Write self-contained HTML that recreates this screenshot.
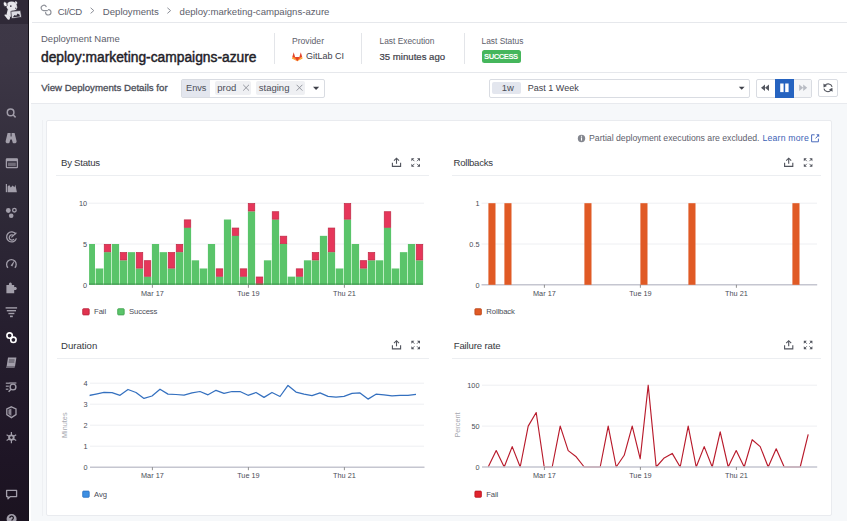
<!DOCTYPE html>
<html><head><meta charset="utf-8">
<style>
*{box-sizing:border-box;margin:0;padding:0}
html,body{width:847px;height:521px;overflow:hidden;background:#fff;font-family:"Liberation Sans", sans-serif;}
.abs{position:absolute;white-space:nowrap}
#side{position:absolute;left:0;top:0;width:28px;height:521px;background:linear-gradient(#3e3847 0px,#3d3746 60px,#2f2a38 200px,#272030 310px,#1e1525 460px,#1b1320 521px);}
#sideline{position:absolute;left:28px;top:0;width:1px;height:521px;background:#15121a}
#logo{position:absolute;left:0;top:0;width:28px;height:23.5px;background:#2f2937}
.content{position:absolute;left:31px;top:102.6px;width:816px;height:419px;background:#f6f8fa;border-top:1px solid #e8eaee}
.panel{position:absolute;left:46px;top:120px;width:786px;height:396px;background:#fff;border:1px solid #e9ebef;border-radius:2px}
.shadow{position:absolute;left:42px;top:120px;width:1px;height:396px;background:#eef0f3}
.hline{position:absolute;height:1px;background:#e6e8ec}
.vline{position:absolute;width:1px;background:#e3e5e9}
.lbl{color:#5d606b}
</style></head><body>
<div id="side"></div>
<div id="logo"></div>
<div id="sideline"></div>
<div class="content"></div>
<div class="shadow"></div>
<div class="panel"></div>

<!-- breadcrumb -->
<div class="hline" style="left:32px;top:22px;width:815px"></div>
<div class="abs" style="left:57.8px;top:4.6px;font-size:9.6px;line-height:14px;color:#5d606b;letter-spacing:-0.45px">CI/CD</div>
<div class="abs" style="left:102.8px;top:4.6px;font-size:9.6px;line-height:14px;color:#5d606b">Deployments</div>
<div class="abs" style="left:179.6px;top:4.6px;font-size:9.6px;line-height:14px;color:#5d606b">deploy:marketing-campaigns-azure</div>

<!-- header -->
<div class="abs lbl" style="left:41px;top:33px;font-size:9.5px;line-height:11px">Deployment Name</div>
<div class="abs" style="left:41px;top:50px;font-size:13.8px;line-height:15px;font-weight:400;-webkit-text-stroke:0.45px #1f2128;color:#1f2128">deploy:marketing-campaigns-azure</div>
<div class="vline" style="left:274px;top:33px;height:31px"></div>
<div class="abs lbl" style="left:292px;top:36px;font-size:8.6px;line-height:11px">Provider</div>
<div class="abs" style="left:306px;top:51px;font-size:9px;line-height:11px;color:#3e4049">GitLab CI</div>
<div class="vline" style="left:361px;top:33px;height:31px"></div>
<div class="abs lbl" style="left:379.5px;top:36px;font-size:8.4px;line-height:11px">Last Execution</div>
<div class="abs" style="left:379.5px;top:51px;font-size:9.6px;line-height:11px;color:#3e4049;-webkit-text-stroke:0.2px #3e4049">35 minutes ago</div>
<div class="vline" style="left:464px;top:33px;height:31px"></div>
<div class="abs lbl" style="left:481.5px;top:36px;font-size:8.4px;line-height:11px">Last Status</div>
<div class="abs" style="left:481.6px;top:49.6px;width:39px;height:13.4px;background:#45b65c;border-radius:2.5px;color:#fff;font-size:7.7px;font-weight:700;line-height:13.4px;text-align:center;letter-spacing:-0.5px;text-indent:-0.5px">SUCCESS</div>
<div class="hline" style="left:29px;top:72px;width:818px"></div>

<!-- filter row -->
<div class="abs" style="left:41.3px;top:82px;font-size:9.7px;line-height:11px;color:#4b4e58;-webkit-text-stroke:0.3px #4b4e58">View Deployments Details for</div>
<div class="abs" style="left:181px;top:78.5px;width:144px;height:19px;border:1px solid #d9dce2;border-radius:2px;background:#fff"></div>
<div class="abs" style="left:182px;top:79.5px;width:28px;height:17px;background:#e3e6ee"></div>
<div class="abs" style="left:186px;top:82.5px;font-size:9.2px;line-height:11px;color:#4b4e58">Envs</div>
<div class="abs" style="left:215px;top:81px;width:36px;height:13.5px;background:#eff0f3;border-radius:2px"></div>
<div class="abs" style="left:217.3px;top:81.5px;font-size:9.5px;line-height:11px;color:#4b4e58">prod</div>
<div class="abs" style="left:256px;top:81px;width:48.5px;height:13.5px;background:#eff0f3;border-radius:2px"></div>
<div class="abs" style="left:258.8px;top:81.5px;font-size:9.5px;line-height:11px;color:#4b4e58">staging</div>
<div class="abs" style="left:489px;top:78.5px;width:261px;height:19px;border:1px solid #d9dce2;border-radius:2px;background:#fff"></div>
<div class="abs" style="left:492.4px;top:81.6px;width:28.8px;height:12.5px;background:#e3e6ee;border-radius:2px"></div>
<div class="abs" style="left:501.7px;top:81.6px;font-size:9.5px;line-height:11px;color:#4b4e58">1w</div>
<div class="abs" style="left:527.8px;top:82.5px;font-size:9px;line-height:11px;color:#3e4049">Past 1 Week</div>
<div class="abs" style="left:756.4px;top:78.5px;width:56px;height:19px;border:1px solid #d9dce2;border-radius:2px;background:#fff"></div>
<div class="abs" style="left:775px;top:78.5px;width:18.8px;height:19px;background:#2563c0"></div>
<div class="abs" style="left:793.8px;top:79.5px;width:17.7px;height:17px;background:#f5f6f8"></div>
<div class="abs" style="left:818.2px;top:78.6px;width:19.6px;height:18.6px;border:1px solid #d9dce2;border-radius:2px;background:#fff"></div>

<!-- info -->
<div class="abs" style="left:589px;top:133px;font-size:8.7px;line-height:11px;color:#5d606b">Partial deployment executions are excluded. <span style="color:#3c62b6;letter-spacing:0.2px;margin-left:0.6px">Learn more</span></div>

<!-- widget titles -->
<div class="abs" style="left:61px;top:156.8px;font-size:9.6px;line-height:11px;letter-spacing:-0.25px;color:#363840">By Status</div>
<div class="abs" style="left:453.5px;top:156.8px;font-size:9.6px;line-height:11px;letter-spacing:-0.25px;color:#363840">Rollbacks</div>
<div class="abs" style="left:61px;top:339.9px;font-size:9.6px;line-height:11px;color:#363840">Duration</div>
<div class="abs" style="left:453.7px;top:339.9px;font-size:9.6px;line-height:11px;letter-spacing:-0.14px;color:#363840">Failure rate</div>
<div class="hline" style="left:56px;top:175px;width:373px;background:#eceef1"></div>
<div class="hline" style="left:452px;top:175px;width:369px;background:#eceef1"></div>
<div class="hline" style="left:56.5px;top:357.5px;width:372.5px;background:#eceef1"></div>
<div class="hline" style="left:452px;top:357.5px;width:369px;background:#eceef1"></div>

<svg class="abs" style="left:0;top:0" width="847" height="521" viewBox="0 0 847 521" font-family='"Liberation Sans", sans-serif'>
<line x1="88.5" y1="244.0" x2="424" y2="244.0" stroke="#eeeff2" stroke-width="1"/>
<line x1="88.5" y1="203.20000000000002" x2="424" y2="203.20000000000002" stroke="#eeeff2" stroke-width="1"/>
<text x="87" y="287.5" font-size="7.3" fill="#4a4d57" text-anchor="end" >0</text>
<text x="87" y="246.7" font-size="7.3" fill="#4a4d57" text-anchor="end" >5</text>
<text x="87" y="205.9" font-size="7.3" fill="#4a4d57" text-anchor="end" >10</text>
<rect x="89.10" y="244.00" width="5.90" height="40.80" fill="#5ac46a"/>
<rect x="95.90" y="268.48" width="7.20" height="16.32" fill="#5ac46a"/>
<rect x="103.90" y="252.16" width="7.20" height="32.64" fill="#5ac46a"/>
<rect x="104.25" y="244.35" width="6.50" height="7.46" fill="#e6365a" stroke="#bf2a45" stroke-width="0.7"/>
<rect x="111.90" y="244.00" width="7.20" height="40.80" fill="#5ac46a"/>
<rect x="119.90" y="260.32" width="7.20" height="24.48" fill="#5ac46a"/>
<rect x="120.25" y="252.51" width="6.50" height="7.46" fill="#e6365a" stroke="#bf2a45" stroke-width="0.7"/>
<rect x="127.90" y="252.16" width="7.20" height="32.64" fill="#5ac46a"/>
<rect x="135.90" y="268.48" width="7.20" height="16.32" fill="#5ac46a"/>
<rect x="136.25" y="252.51" width="6.50" height="15.62" fill="#e6365a" stroke="#bf2a45" stroke-width="0.7"/>
<rect x="143.90" y="276.64" width="7.20" height="8.16" fill="#5ac46a"/>
<rect x="144.25" y="260.67" width="6.50" height="15.62" fill="#e6365a" stroke="#bf2a45" stroke-width="0.7"/>
<rect x="151.90" y="244.00" width="7.20" height="40.80" fill="#5ac46a"/>
<rect x="159.90" y="252.16" width="7.20" height="32.64" fill="#5ac46a"/>
<rect x="167.90" y="268.48" width="7.20" height="16.32" fill="#5ac46a"/>
<rect x="168.25" y="252.51" width="6.50" height="15.62" fill="#e6365a" stroke="#bf2a45" stroke-width="0.7"/>
<rect x="175.90" y="252.16" width="7.20" height="32.64" fill="#5ac46a"/>
<rect x="176.25" y="244.35" width="6.50" height="7.46" fill="#e6365a" stroke="#bf2a45" stroke-width="0.7"/>
<rect x="183.90" y="227.68" width="7.20" height="57.12" fill="#5ac46a"/>
<rect x="184.25" y="219.87" width="6.50" height="7.46" fill="#e6365a" stroke="#bf2a45" stroke-width="0.7"/>
<rect x="191.90" y="260.32" width="7.20" height="24.48" fill="#5ac46a"/>
<rect x="199.90" y="268.48" width="7.20" height="16.32" fill="#5ac46a"/>
<rect x="207.90" y="244.00" width="7.20" height="40.80" fill="#5ac46a"/>
<rect x="215.90" y="276.64" width="7.20" height="8.16" fill="#5ac46a"/>
<rect x="216.25" y="268.83" width="6.50" height="7.46" fill="#e6365a" stroke="#bf2a45" stroke-width="0.7"/>
<rect x="223.90" y="219.52" width="7.20" height="65.28" fill="#5ac46a"/>
<rect x="231.90" y="235.84" width="7.20" height="48.96" fill="#5ac46a"/>
<rect x="232.25" y="228.03" width="6.50" height="7.46" fill="#e6365a" stroke="#bf2a45" stroke-width="0.7"/>
<rect x="239.90" y="276.64" width="7.20" height="8.16" fill="#5ac46a"/>
<rect x="240.25" y="268.83" width="6.50" height="7.46" fill="#e6365a" stroke="#bf2a45" stroke-width="0.7"/>
<rect x="247.90" y="211.36" width="7.20" height="73.44" fill="#5ac46a"/>
<rect x="248.25" y="203.55" width="6.50" height="7.46" fill="#e6365a" stroke="#bf2a45" stroke-width="0.7"/>
<rect x="256.25" y="276.99" width="6.50" height="7.46" fill="#e6365a" stroke="#bf2a45" stroke-width="0.7"/>
<rect x="263.90" y="260.32" width="7.20" height="24.48" fill="#5ac46a"/>
<rect x="271.90" y="219.52" width="7.20" height="65.28" fill="#5ac46a"/>
<rect x="272.25" y="211.71" width="6.50" height="7.46" fill="#e6365a" stroke="#bf2a45" stroke-width="0.7"/>
<rect x="279.90" y="244.00" width="7.20" height="40.80" fill="#5ac46a"/>
<rect x="280.25" y="236.19" width="6.50" height="7.46" fill="#e6365a" stroke="#bf2a45" stroke-width="0.7"/>
<rect x="287.90" y="276.64" width="7.20" height="8.16" fill="#5ac46a"/>
<rect x="295.90" y="276.64" width="7.20" height="8.16" fill="#5ac46a"/>
<rect x="296.25" y="268.83" width="6.50" height="7.46" fill="#e6365a" stroke="#bf2a45" stroke-width="0.7"/>
<rect x="303.90" y="260.32" width="7.20" height="24.48" fill="#5ac46a"/>
<rect x="311.90" y="260.32" width="7.20" height="24.48" fill="#5ac46a"/>
<rect x="312.25" y="252.51" width="6.50" height="7.46" fill="#e6365a" stroke="#bf2a45" stroke-width="0.7"/>
<rect x="319.90" y="235.84" width="7.20" height="48.96" fill="#5ac46a"/>
<rect x="327.90" y="252.16" width="7.20" height="32.64" fill="#5ac46a"/>
<rect x="328.25" y="228.03" width="6.50" height="23.78" fill="#e6365a" stroke="#bf2a45" stroke-width="0.7"/>
<rect x="335.90" y="268.48" width="7.20" height="16.32" fill="#5ac46a"/>
<rect x="343.90" y="219.52" width="7.20" height="65.28" fill="#5ac46a"/>
<rect x="344.25" y="203.55" width="6.50" height="15.62" fill="#e6365a" stroke="#bf2a45" stroke-width="0.7"/>
<rect x="351.90" y="244.00" width="7.20" height="40.80" fill="#5ac46a"/>
<rect x="359.90" y="268.48" width="7.20" height="16.32" fill="#5ac46a"/>
<rect x="360.25" y="260.67" width="6.50" height="7.46" fill="#e6365a" stroke="#bf2a45" stroke-width="0.7"/>
<rect x="367.90" y="260.32" width="7.20" height="24.48" fill="#5ac46a"/>
<rect x="368.25" y="252.51" width="6.50" height="7.46" fill="#e6365a" stroke="#bf2a45" stroke-width="0.7"/>
<rect x="375.90" y="260.32" width="7.20" height="24.48" fill="#5ac46a"/>
<rect x="383.90" y="227.68" width="7.20" height="57.12" fill="#5ac46a"/>
<rect x="384.25" y="211.71" width="6.50" height="15.62" fill="#e6365a" stroke="#bf2a45" stroke-width="0.7"/>
<rect x="391.90" y="268.48" width="7.20" height="16.32" fill="#5ac46a"/>
<rect x="399.90" y="252.16" width="7.20" height="32.64" fill="#5ac46a"/>
<rect x="407.90" y="244.00" width="7.20" height="40.80" fill="#5ac46a"/>
<rect x="415.90" y="260.32" width="7.20" height="24.48" fill="#5ac46a"/>
<rect x="416.25" y="244.35" width="6.50" height="15.62" fill="#e6365a" stroke="#bf2a45" stroke-width="0.7"/>
<rect x="95.10" y="268.48" width="0.8" height="16.32" fill="#b6ecbc"/>
<rect x="103.10" y="268.48" width="0.8" height="16.32" fill="#b6ecbc"/>
<rect x="111.10" y="252.16" width="0.8" height="32.64" fill="#b6ecbc"/>
<rect x="119.10" y="260.32" width="0.8" height="24.48" fill="#b6ecbc"/>
<rect x="127.10" y="260.32" width="0.8" height="24.48" fill="#b6ecbc"/>
<rect x="135.10" y="268.48" width="0.8" height="16.32" fill="#b6ecbc"/>
<rect x="143.10" y="276.64" width="0.8" height="8.16" fill="#b6ecbc"/>
<rect x="151.10" y="276.64" width="0.8" height="8.16" fill="#b6ecbc"/>
<rect x="159.10" y="252.16" width="0.8" height="32.64" fill="#b6ecbc"/>
<rect x="167.10" y="268.48" width="0.8" height="16.32" fill="#b6ecbc"/>
<rect x="175.10" y="268.48" width="0.8" height="16.32" fill="#b6ecbc"/>
<rect x="183.10" y="252.16" width="0.8" height="32.64" fill="#b6ecbc"/>
<rect x="191.10" y="260.32" width="0.8" height="24.48" fill="#b6ecbc"/>
<rect x="199.10" y="268.48" width="0.8" height="16.32" fill="#b6ecbc"/>
<rect x="207.10" y="268.48" width="0.8" height="16.32" fill="#b6ecbc"/>
<rect x="215.10" y="276.64" width="0.8" height="8.16" fill="#b6ecbc"/>
<rect x="223.10" y="276.64" width="0.8" height="8.16" fill="#b6ecbc"/>
<rect x="231.10" y="235.84" width="0.8" height="48.96" fill="#b6ecbc"/>
<rect x="239.10" y="276.64" width="0.8" height="8.16" fill="#b6ecbc"/>
<rect x="247.10" y="276.64" width="0.8" height="8.16" fill="#b6ecbc"/>
<rect x="271.10" y="260.32" width="0.8" height="24.48" fill="#b6ecbc"/>
<rect x="279.10" y="244.00" width="0.8" height="40.80" fill="#b6ecbc"/>
<rect x="287.10" y="276.64" width="0.8" height="8.16" fill="#b6ecbc"/>
<rect x="295.10" y="276.64" width="0.8" height="8.16" fill="#b6ecbc"/>
<rect x="303.10" y="276.64" width="0.8" height="8.16" fill="#b6ecbc"/>
<rect x="311.10" y="260.32" width="0.8" height="24.48" fill="#b6ecbc"/>
<rect x="319.10" y="260.32" width="0.8" height="24.48" fill="#b6ecbc"/>
<rect x="327.10" y="252.16" width="0.8" height="32.64" fill="#b6ecbc"/>
<rect x="335.10" y="268.48" width="0.8" height="16.32" fill="#b6ecbc"/>
<rect x="343.10" y="268.48" width="0.8" height="16.32" fill="#b6ecbc"/>
<rect x="351.10" y="244.00" width="0.8" height="40.80" fill="#b6ecbc"/>
<rect x="359.10" y="268.48" width="0.8" height="16.32" fill="#b6ecbc"/>
<rect x="367.10" y="268.48" width="0.8" height="16.32" fill="#b6ecbc"/>
<rect x="375.10" y="260.32" width="0.8" height="24.48" fill="#b6ecbc"/>
<rect x="383.10" y="260.32" width="0.8" height="24.48" fill="#b6ecbc"/>
<rect x="391.10" y="268.48" width="0.8" height="16.32" fill="#b6ecbc"/>
<rect x="399.10" y="268.48" width="0.8" height="16.32" fill="#b6ecbc"/>
<rect x="407.10" y="252.16" width="0.8" height="32.64" fill="#b6ecbc"/>
<rect x="415.10" y="260.32" width="0.8" height="24.48" fill="#b6ecbc"/>
<line x1="89" y1="284.2" x2="423" y2="284.2" stroke="#3d8f4a" stroke-width="1.2" opacity="0.8"/>
<line x1="152.4" y1="284.8" x2="152.4" y2="287.8" stroke="#777" stroke-width="0.8"/>
<text x="152.4" y="295.8" font-size="7.3" fill="#4a4d57" text-anchor="middle" >Mar 17</text>
<line x1="248.4" y1="284.8" x2="248.4" y2="287.8" stroke="#777" stroke-width="0.8"/>
<text x="248.4" y="295.8" font-size="7.3" fill="#4a4d57" text-anchor="middle" >Tue 19</text>
<line x1="344.4" y1="284.8" x2="344.4" y2="287.8" stroke="#777" stroke-width="0.8"/>
<text x="344.4" y="295.8" font-size="7.3" fill="#4a4d57" text-anchor="middle" >Thu 21</text>
<line x1="481.5" y1="244.0" x2="817" y2="244.0" stroke="#eeeff2" stroke-width="1"/>
<line x1="481.5" y1="203.20000000000002" x2="817" y2="203.20000000000002" stroke="#eeeff2" stroke-width="1"/>
<text x="479.5" y="287.5" font-size="7.3" fill="#4a4d57" text-anchor="end" >0</text>
<text x="479.5" y="246.7" font-size="7.3" fill="#4a4d57" text-anchor="end" >0.5</text>
<text x="479.5" y="205.9" font-size="7.3" fill="#4a4d57" text-anchor="end" >1</text>
<line x1="481.5" y1="284.8" x2="817.2" y2="284.8" stroke="#c5c6d0" stroke-width="1.6"/>
<line x1="544.4" y1="284.8" x2="544.4" y2="287.8" stroke="#777" stroke-width="0.8"/>
<text x="544.4" y="295.8" font-size="7.3" fill="#4a4d57" text-anchor="middle" >Mar 17</text>
<line x1="640.4" y1="284.8" x2="640.4" y2="287.8" stroke="#777" stroke-width="0.8"/>
<text x="640.4" y="295.8" font-size="7.3" fill="#4a4d57" text-anchor="middle" >Tue 19</text>
<line x1="736.4" y1="284.8" x2="736.4" y2="287.8" stroke="#777" stroke-width="0.8"/>
<text x="736.4" y="295.8" font-size="7.3" fill="#4a4d57" text-anchor="middle" >Thu 21</text>
<rect x="488.40" y="203.20" width="7.1" height="81.60" fill="#e05a25"/>
<rect x="504.40" y="203.20" width="7.1" height="81.60" fill="#e05a25"/>
<rect x="584.40" y="203.20" width="7.1" height="81.60" fill="#e05a25"/>
<rect x="640.40" y="203.20" width="7.1" height="81.60" fill="#e05a25"/>
<rect x="688.40" y="203.20" width="7.1" height="81.60" fill="#e05a25"/>
<rect x="792.40" y="203.20" width="7.1" height="81.60" fill="#e05a25"/>
<line x1="90" y1="446.2" x2="424" y2="446.2" stroke="#eeeff2" stroke-width="1"/>
<line x1="90" y1="425.2" x2="424" y2="425.2" stroke="#eeeff2" stroke-width="1"/>
<line x1="90" y1="404.2" x2="424" y2="404.2" stroke="#eeeff2" stroke-width="1"/>
<line x1="90" y1="383.2" x2="424" y2="383.2" stroke="#eeeff2" stroke-width="1"/>
<text x="87.5" y="469.9" font-size="7.3" fill="#4a4d57" text-anchor="end" >0</text>
<text x="87.5" y="448.9" font-size="7.3" fill="#4a4d57" text-anchor="end" >1</text>
<text x="87.5" y="427.9" font-size="7.3" fill="#4a4d57" text-anchor="end" >2</text>
<text x="87.5" y="406.9" font-size="7.3" fill="#4a4d57" text-anchor="end" >3</text>
<text x="87.5" y="385.9" font-size="7.3" fill="#4a4d57" text-anchor="end" >4</text>
<clipPath id="cd"><rect x="89.6" y="370" width="340" height="100"/></clipPath>
<polyline clip-path="url(#cd)" points="88.0,395.7 96.0,394.1 104.0,392.4 112.0,392.7 120.0,395.3 128.0,389.5 136.0,392.5 144.0,398.4 152.0,396.0 160.0,389.2 168.0,394.1 176.0,394.5 184.0,395.1 192.0,392.9 200.0,391.5 208.0,394.8 216.0,390.3 224.0,393.3 232.0,391.5 240.0,391.5 248.0,395.3 256.0,392.5 264.0,397.4 272.0,392.5 280.0,396.5 288.0,385.4 296.0,392.1 304.0,394.1 312.0,395.7 320.0,392.9 328.0,396.3 336.0,397.2 344.0,396.3 352.0,393.3 360.0,392.9 368.0,399.1 376.0,394.2 384.0,394.8 392.0,395.8 400.0,395.3 408.0,395.3 416.0,394.4" fill="none" stroke="#3470bf" stroke-width="1.25" stroke-linejoin="round"/>
<line x1="90" y1="467.2" x2="424.5" y2="467.2" stroke="#c5c6d0" stroke-width="1.6"/>
<line x1="152.4" y1="467.2" x2="152.4" y2="470.2" stroke="#777" stroke-width="0.8"/>
<text x="152.4" y="478.2" font-size="7.3" fill="#4a4d57" text-anchor="middle" >Mar 17</text>
<line x1="248.4" y1="467.2" x2="248.4" y2="470.2" stroke="#777" stroke-width="0.8"/>
<text x="248.4" y="478.2" font-size="7.3" fill="#4a4d57" text-anchor="middle" >Tue 19</text>
<line x1="344.4" y1="467.2" x2="344.4" y2="470.2" stroke="#777" stroke-width="0.8"/>
<text x="344.4" y="478.2" font-size="7.3" fill="#4a4d57" text-anchor="middle" >Thu 21</text>
<text x="0" y="0" font-size="7.3" fill="#a6a8af" text-anchor="middle" transform="translate(67.2,425.2) rotate(-90)">Minutes</text>
<line x1="482" y1="426.1" x2="817" y2="426.1" stroke="#eeeff2" stroke-width="1"/>
<line x1="482" y1="385.2" x2="817" y2="385.2" stroke="#eeeff2" stroke-width="1"/>
<text x="479.5" y="469.7" font-size="7.3" fill="#4a4d57" text-anchor="end" >0</text>
<text x="479.5" y="428.8" font-size="7.3" fill="#4a4d57" text-anchor="end" >50</text>
<text x="479.5" y="387.9" font-size="7.3" fill="#4a4d57" text-anchor="end" >100</text>
<polyline points="488.2,467.0 496.2,450.6 504.2,467.0 512.2,446.6 520.2,467.0 528.2,426.1 536.2,412.5 544.2,467.0 552.2,467.0 560.2,426.1 568.2,450.6 576.2,456.8 584.2,467.0 592.2,467.0 600.2,467.0 608.2,426.1 616.2,467.0 624.2,455.3 632.2,426.1 640.2,458.8 648.2,385.2 656.2,467.0 664.2,457.9 672.2,453.4 680.2,467.0 688.2,426.1 696.2,467.0 704.2,446.6 712.2,467.0 720.2,431.9 728.2,467.0 736.2,450.6 744.2,467.0 752.2,439.7 760.2,446.6 768.2,467.0 776.2,448.8 784.2,467.0 792.2,467.0 800.2,467.0 808.2,434.3" fill="none" stroke="#b81a2b" stroke-width="1.15" stroke-linejoin="round"/>
<line x1="482" y1="467.0" x2="817.2" y2="467.0" stroke="#c5c6d0" stroke-width="1.6"/>
<line x1="544.4" y1="467.0" x2="544.4" y2="470.0" stroke="#777" stroke-width="0.8"/>
<text x="544.4" y="478.0" font-size="7.3" fill="#4a4d57" text-anchor="middle" >Mar 17</text>
<line x1="640.4" y1="467.0" x2="640.4" y2="470.0" stroke="#777" stroke-width="0.8"/>
<text x="640.4" y="478.0" font-size="7.3" fill="#4a4d57" text-anchor="middle" >Tue 19</text>
<line x1="736.4" y1="467.0" x2="736.4" y2="470.0" stroke="#777" stroke-width="0.8"/>
<text x="736.4" y="478.0" font-size="7.3" fill="#4a4d57" text-anchor="middle" >Thu 21</text>
<text x="0" y="0" font-size="7.3" fill="#a6a8af" text-anchor="middle" transform="translate(460.2,425) rotate(-90)">Percent</text>
<rect x="82.7" y="308.7" width="6.5" height="6.2" rx="0.8" fill="#e0334f" stroke="#b81f38" stroke-width="0.8"/>
<text x="94.1" y="314.1" font-size="7.7" fill="#4a4d57" text-anchor="start" letter-spacing="-0.12">Fail</text>
<rect x="117.7" y="308.7" width="6.5" height="6.2" rx="0.8" fill="#5ac46a" stroke="#3c9e4b" stroke-width="0.8"/>
<text x="129.1" y="314.1" font-size="7.7" fill="#4a4d57" text-anchor="start" letter-spacing="-0.12">Success</text>
<rect x="474.9" y="308.7" width="6.5" height="6.2" rx="0.8" fill="#e05a25" stroke="#b84418" stroke-width="0.8"/>
<text x="486.3" y="314.1" font-size="7.7" fill="#4a4d57" text-anchor="start" letter-spacing="-0.12">Rollback</text>
<rect x="82.7" y="491.09999999999997" width="6.5" height="6.2" rx="0.8" fill="#3d8fe2" stroke="#2a6fc0" stroke-width="0.8"/>
<text x="94.1" y="496.5" font-size="7.7" fill="#4a4d57" text-anchor="start" letter-spacing="-0.12">Avg</text>
<rect x="474.9" y="491.09999999999997" width="6.5" height="6.2" rx="0.8" fill="#e1232d" stroke="#b8141f" stroke-width="0.8"/>
<text x="486.3" y="496.5" font-size="7.7" fill="#4a4d57" text-anchor="start" letter-spacing="-0.12">Fail</text>
<g fill="#e6e5ea"><ellipse cx="11.6" cy="6" rx="5.3" ry="4.6"/><path d="M13,7 L17.3,6.6 C17.4,8.6 16.4,10.2 14.6,10.6 L12,10.8 Z"/><path d="M15,1.4 C16.4,1 17.6,2 17.2,3.8 L15.6,4 Z"/><path d="M7.8,9.2 L12,10 L11.6,16.4 L9.6,17 L6.6,14.2 Z"/><path d="M4.6,15.6 C4.2,15 4.6,14.4 5.2,14.4 L7.8,14.6 L10.2,17.6 L9.6,19.2 C9.2,19.8 8.4,19.8 7.8,19.6 Z"/></g><ellipse cx="5.2" cy="4.2" rx="1.8" ry="2.6" transform="rotate(-25 5.2 4.2)" fill="#f2f1f5" stroke="#2f2a37" stroke-width="0.7"/><path d="M10.9,11.3 L20.6,10.5 L21.5,17.3 L11.5,18.6 Z" fill="#dcdbe2" stroke="#2f2a37" stroke-width="0.7"/><circle cx="10.8" cy="6.1" r="0.85" fill="#3a3342"/><circle cx="15.8" cy="8.4" r="0.8" fill="#6a6570"/><path d="M12.8,17.2 L14.6,15 L16.2,15.8 L17.6,13.4 L19.6,14.8 L19.9,16.5 Z" fill="#2f2a37"/>
<g fill="none" stroke="#a29eaa" stroke-width="1.5"><circle cx="10.6" cy="112.4" r="3.3"/><line x1="13" y1="114.8" x2="15.6" y2="117.4"/></g>
<g fill="#a29eaa"><path d="M7.6,133 L10.6,133 L10.6,136.6 L11.6,136.6 L11.6,133 L14.6,133 L16.6,141.2 C16.6,142.6 15.8,143.3 14.6,143.3 C13.2,143.3 12.4,142.6 12.4,141.4 L11.8,139.6 L10.4,139.6 L9.8,141.4 C9.8,142.6 9,143.3 7.6,143.3 C6.4,143.3 5.6,142.6 5.6,141.2 Z"/></g>
<g fill="none" stroke="#a29eaa" stroke-width="1.3"><rect x="6.4" y="158.8" width="11" height="8.8" rx="0.6"/></g><rect x="6.4" y="158.8" width="11" height="2.4" fill="#a29eaa"/><rect x="8" y="162.6" width="7.8" height="3.6" fill="#a29eaa" opacity="0.55"/>
<g fill="#a29eaa"><rect x="5.8" y="184" width="1.2" height="8.2"/><path d="M7.6,192.2 L7.6,186.4 L9.2,185 L10.8,187.6 L12.6,185.6 L14.4,187.2 L15.4,184.8 L16.9,192.2 Z"/></g>
<circle cx="8.3" cy="210.5" r="2.4" fill="#a29eaa"/><circle cx="14.4" cy="210.2" r="1.8" fill="none" stroke="#a29eaa" stroke-width="1.3"/><circle cx="11.2" cy="215.8" r="2.3" fill="#a29eaa"/>
<g fill="none" stroke="#a29eaa" stroke-width="1.3"><path d="M15.8,234.2 A5,5 0 1 0 16.4,238.4"/><path d="M13.6,235.6 A2.6,2.6 0 1 0 14,239"/><line x1="11.4" y1="237.4" x2="16.4" y2="232.6"/></g>
<g fill="none" stroke="#a29eaa" stroke-width="1.3"><path d="M8,267.8 A4.8,4.8 0 1 1 14.8,267.8"/></g><path d="M10.6,265.6 L15,259.8 L12.4,266.6 Z" fill="#a29eaa"/>
<path d="M6.4,285 L9,285 C8.6,283.2 9.4,282.4 10.4,282.4 C11.4,282.4 12.2,283.2 11.8,285 L14.2,285 L14.2,287.2 C16,286.8 16.8,287.6 16.8,288.6 C16.8,289.6 16,290.4 14.2,290 L14.2,293.2 L6.4,293.2 Z" fill="#a29eaa"/>
<g fill="#a29eaa"><rect x="5.6" y="307.2" width="11.5" height="1.4"/><rect x="6.8" y="310" width="9.2" height="1.4"/><rect x="8.4" y="312.8" width="6" height="1.4"/><rect x="10" y="315.6" width="2.8" height="1.6"/></g>
<g fill="none" stroke="#ffffff" stroke-width="1.6"><circle cx="9.6" cy="335.6" r="2.7"/><circle cx="13.4" cy="339.8" r="2.7"/></g>
<g fill="#a29eaa"><path d="M8,357.4 L16.4,357.4 L15,366.4 L6.6,366.4 Z"/><path d="M6.2,366.6 L14.8,366.6 L14.6,368 L6,368 Z" opacity="0.6"/></g><g stroke="#2a2230" stroke-width="0.7"><line x1="9" y1="360" x2="14.6" y2="360"/><line x1="8.7" y1="362" x2="14.3" y2="362"/></g>
<g fill="#a29eaa"><rect x="5.8" y="382.6" width="4" height="1.2"/><rect x="5.8" y="385.6" width="3" height="1.2"/><rect x="5.8" y="388.6" width="2.6" height="1.2"/></g><g fill="none" stroke="#a29eaa" stroke-width="1.4"><circle cx="13" cy="387" r="2.9"/><line x1="11" y1="389.2" x2="8.6" y2="391.8"/></g><rect x="9.4" y="382.4" width="7" height="1.2" fill="#a29eaa"/>
<g fill="none" stroke="#a29eaa" stroke-width="1.3"><path d="M11.4,406.8 L16,409 L16,414.6 L11.4,417.6 L6.8,414.6 L6.8,409 Z"/></g><path d="M11.4,408.4 L11.4,416 L8.4,414 L8.4,409.8 Z" fill="#a29eaa" opacity="0.8"/>
<g fill="#a29eaa"><circle cx="11.4" cy="437.6" r="3.2"/></g><g stroke="#a29eaa" stroke-width="1.2"><line x1="11.4" y1="432" x2="11.4" y2="443.2"/><line x1="6.6" y1="434.8" x2="16.2" y2="440.4"/><line x1="6.6" y1="440.4" x2="16.2" y2="434.8"/></g><circle cx="11.4" cy="437.6" r="1.3" fill="#231c28"/>
<path d="M6.6,490.4 L16.6,490.4 L16.6,496.6 L10.4,496.6 L8,498.8 L8,496.6 L6.6,496.6 Z" fill="none" stroke="#a29eaa" stroke-width="1.3" stroke-linejoin="round"/>
<circle cx="11.6" cy="519" r="5" fill="#a29eaa"/><path d="M9.8,518 A1.8,1.8 0 1 1 12.2,519.6 L11.8,520.6" fill="none" stroke="#1c1620" stroke-width="1.2"/>
<g fill="none" stroke="#8e9199" stroke-width="1.15" stroke-linecap="round"><path d="M46.2,6.6 A2.7,2.7 0 1 0 44.2,10.6 L47.4,10.6"/><path d="M45.6,12.4 A2.7,2.7 0 1 0 48.4,9.6"/></g>
<path d="M90.6,7.8 L93.8,10.6 L90.6,13.4" fill="none" stroke="#8b8e97" stroke-width="1"/>
<path d="M167.4,7.8 L170.6,10.6 L167.4,13.4" fill="none" stroke="#8b8e97" stroke-width="1"/>
<path d="M292.3,57 L293.7,52.2 L295.1,57 Z" fill="#e24329"/><path d="M299.4,57 L300.8,52.2 L302.2,57 Z" fill="#e24329"/><path d="M292.3,57 L302.2,57 L297.25,61.2 Z" fill="#fc6d26"/><path d="M295.1,57 L299.4,57 L297.25,61.2 Z" fill="#e24329"/><path d="M292.3,57 L291.9,58.4 L297.25,61.2 Z" fill="#fca326"/><path d="M302.2,57 L302.6,58.4 L297.25,61.2 Z" fill="#fca326"/>
<g stroke="#8a8d96" stroke-width="0.9"><line x1="243.2" y1="84.8" x2="249.0" y2="90.6"/><line x1="249.0" y1="84.8" x2="243.2" y2="90.6"/></g>
<g stroke="#8a8d96" stroke-width="0.9"><line x1="296.6" y1="84.8" x2="302.40000000000003" y2="90.6"/><line x1="302.40000000000003" y1="84.8" x2="296.6" y2="90.6"/></g>
<path d="M313,86.8 L319.2,86.8 L316.1,89.9 Z" fill="#3e4049"/>
<path d="M738.8,86.8 L744.6,86.8 L741.7,89.7 Z" fill="#3e4049"/>
<path d="M765,84.6 L761,87.8 L765,91 Z M769,84.6 L765,87.8 L769,91 Z" fill="#555861"/>
<rect x="780.2" y="83.5" width="3.4" height="8.6" fill="#fff"/><rect x="785.2" y="83.5" width="3.4" height="8.6" fill="#fff"/>
<path d="M799.2,84.6 L803.2,87.8 L799.2,91 Z M803.2,84.6 L807.2,87.8 L803.2,91 Z" fill="#b9bcc4"/>
<g fill="none" stroke="#4f525b" stroke-width="1.1"><path d="M825,85.4 A4.1,4.1 0 0 1 832.1,86.8"/><path d="M831,90.2 A4.1,4.1 0 0 1 823.9,88.6"/></g><path d="M823.4,83.6 L823.6,87.6 L827,86 Z" fill="#4f525b"/><path d="M832.6,91.8 L832.4,87.8 L829,89.4 Z" fill="#4f525b"/>
<circle cx="581.5" cy="138.5" r="3.7" fill="#84878f"/><rect x="580.95" y="135.8" width="1.1" height="1" fill="#fff"/><rect x="580.95" y="137.4" width="1.1" height="3.2" fill="#fff"/>
<g fill="none" stroke="#4c6cbd" stroke-width="1"><path d="M814.6,134.8 L811.6,134.8 L811.6,141.8 L818.4,141.8 L818.4,138.6"/><path d="M815.6,138.4 L818.6,135"/></g><path d="M816.2,134.2 L819.2,134.2 L819.2,137.2 Z" fill="#4c6cbd"/>
<g fill="none" stroke="#50535c" stroke-width="1.1"><path d="M392.4,162.8 L392.4,166.4 L400.6,166.4 L400.6,162.8"/><line x1="396.5" y1="158.6" x2="396.5" y2="163.8"/><path d="M394,160.6 L396.5,158.2 L399,160.6"/></g>
<g fill="#50535c"><path d="M411.4,158.2 L414.4,158.2 L411.4,161.2 Z"/><path d="M420.0,158.2 L417.0,158.2 L420.0,161.2 Z"/><path d="M411.4,166.79999999999998 L414.4,166.79999999999998 L411.4,163.79999999999998 Z"/><path d="M420.0,166.79999999999998 L417.0,166.79999999999998 L420.0,163.79999999999998 Z"/></g><g stroke="#50535c" stroke-width="0.9"><line x1="412.4" y1="159.2" x2="414.4" y2="161.2"/><line x1="419.0" y1="159.2" x2="417.0" y2="161.2"/><line x1="412.4" y1="165.79999999999998" x2="414.4" y2="163.79999999999998"/><line x1="419.0" y1="165.79999999999998" x2="417.0" y2="163.79999999999998"/></g>
<g fill="none" stroke="#50535c" stroke-width="1.1"><path d="M784.6,162.8 L784.6,166.4 L792.8000000000001,166.4 L792.8000000000001,162.8"/><line x1="788.7" y1="158.6" x2="788.7" y2="163.8"/><path d="M786.2,160.6 L788.7,158.2 L791.2,160.6"/></g>
<g fill="#50535c"><path d="M803.8,158.2 L806.8,158.2 L803.8,161.2 Z"/><path d="M812.4,158.2 L809.4,158.2 L812.4,161.2 Z"/><path d="M803.8,166.79999999999998 L806.8,166.79999999999998 L803.8,163.79999999999998 Z"/><path d="M812.4,166.79999999999998 L809.4,166.79999999999998 L812.4,163.79999999999998 Z"/></g><g stroke="#50535c" stroke-width="0.9"><line x1="804.8" y1="159.2" x2="806.8" y2="161.2"/><line x1="811.4" y1="159.2" x2="809.4" y2="161.2"/><line x1="804.8" y1="165.79999999999998" x2="806.8" y2="163.79999999999998"/><line x1="811.4" y1="165.79999999999998" x2="809.4" y2="163.79999999999998"/></g>
<g fill="none" stroke="#50535c" stroke-width="1.1"><path d="M392.4,345.3 L392.4,348.9 L400.6,348.9 L400.6,345.3"/><line x1="396.5" y1="341.1" x2="396.5" y2="346.3"/><path d="M394,343.1 L396.5,340.7 L399,343.1"/></g>
<g fill="#50535c"><path d="M411.4,340.7 L414.4,340.7 L411.4,343.7 Z"/><path d="M420.0,340.7 L417.0,340.7 L420.0,343.7 Z"/><path d="M411.4,349.3 L414.4,349.3 L411.4,346.3 Z"/><path d="M420.0,349.3 L417.0,349.3 L420.0,346.3 Z"/></g><g stroke="#50535c" stroke-width="0.9"><line x1="412.4" y1="341.7" x2="414.4" y2="343.7"/><line x1="419.0" y1="341.7" x2="417.0" y2="343.7"/><line x1="412.4" y1="348.3" x2="414.4" y2="346.3"/><line x1="419.0" y1="348.3" x2="417.0" y2="346.3"/></g>
<g fill="none" stroke="#50535c" stroke-width="1.1"><path d="M784.6,345.3 L784.6,348.9 L792.8000000000001,348.9 L792.8000000000001,345.3"/><line x1="788.7" y1="341.1" x2="788.7" y2="346.3"/><path d="M786.2,343.1 L788.7,340.7 L791.2,343.1"/></g>
<g fill="#50535c"><path d="M803.8,340.7 L806.8,340.7 L803.8,343.7 Z"/><path d="M812.4,340.7 L809.4,340.7 L812.4,343.7 Z"/><path d="M803.8,349.3 L806.8,349.3 L803.8,346.3 Z"/><path d="M812.4,349.3 L809.4,349.3 L812.4,346.3 Z"/></g><g stroke="#50535c" stroke-width="0.9"><line x1="804.8" y1="341.7" x2="806.8" y2="343.7"/><line x1="811.4" y1="341.7" x2="809.4" y2="343.7"/><line x1="804.8" y1="348.3" x2="806.8" y2="346.3"/><line x1="811.4" y1="348.3" x2="809.4" y2="346.3"/></g>
</svg>
</body></html>
